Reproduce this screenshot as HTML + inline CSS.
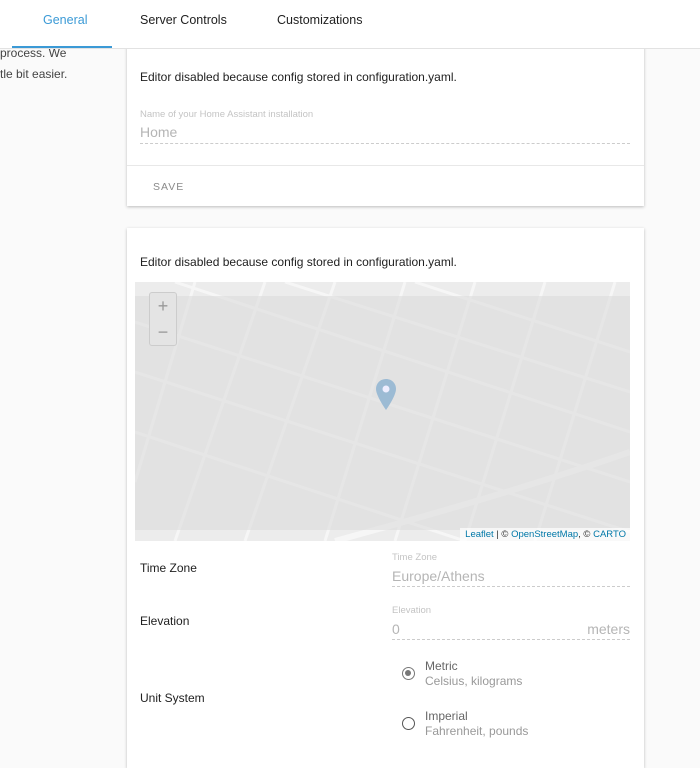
<!DOCTYPE html>
<html><head><style>
*{margin:0;padding:0;box-sizing:border-box}
body{width:700px;height:750px;overflow:hidden;background:#fafafa;font-family:"Liberation Sans",sans-serif;color:#212121;position:relative}
.abs{position:absolute}
.hdr{left:0;top:0;width:700px;height:49px;background:#fff;border-bottom:1px solid #e2e2e2;z-index:5}
.tab{top:13px;font-size:12.5px}
.card{background:#fff;box-shadow:0 1px 3px rgba(0,0,0,.25);left:127px;width:517px}
.t12{font-size:12px}
.dash{border-bottom:1px dashed #ccc}
.lbl{font-size:9.5px;color:#c4c4c4}
.val{font-size:14px;color:#b5b5b5}
</style></head><body>
<div class="abs hdr">
 <div class="abs tab" style="left:43px;color:#3b9ad6">General</div>
 <div class="abs tab" style="left:140px">Server Controls</div>
 <div class="abs tab" style="left:277px">Customizations</div>
 <div class="abs" style="left:12px;top:46px;width:100px;height:2px;background:#3b9ad6"></div>
</div>
<div class="abs t12" style="left:0;top:46px;color:#444">process. We</div>
<div class="abs t12" style="left:0;top:67px;color:#444">tle bit easier.</div>

<div class="abs card" style="top:30px;height:176px">
 <div class="abs t12" style="left:13px;top:40px">Editor disabled because config stored in configuration.yaml.</div>
 <div class="abs lbl" style="left:13px;top:79px">Name of your Home Assistant installation</div>
 <div class="abs val dash" style="left:13px;top:94px;width:490px;height:20px">Home</div>
 <div class="abs" style="left:0;top:135px;width:517px;border-top:1px solid #e8e8e8"></div>
 <div class="abs" style="left:26px;top:151px;font-size:10.5px;letter-spacing:1px;color:#8a8a8a">SAVE</div>
</div>

<div class="abs card" style="top:228px;height:540px">
 <div class="abs t12" style="left:13px;top:27px">Editor disabled because config stored in configuration.yaml.</div>
 <div class="abs" style="left:8px;top:54px;width:495px;height:259px;background:#ececec;overflow:hidden">
  <svg class="abs" style="left:0;top:0" width="495" height="259">
   <g stroke="#f6f6f6" stroke-width="3" fill="none">
    <path d="M0 40 L495 200 M0 90 L495 250 M40 0 L495 150 M150 0 L495 110 M0 150 L330 259 M280 0 L495 70"/>
    <path d="M60 0 L0 200 M130 0 L40 259 M200 0 L110 259 M270 0 L190 259 M340 0 L260 259 M410 0 L330 259 M480 0 L400 259"/>
    <path d="M200 259 Q380 210 495 170" stroke-width="6"/>
   </g>
  </svg>
  <div class="abs" style="left:0;top:14px;width:495px;height:234px;background:rgba(220,220,220,.6)"></div>
  <div class="abs" style="left:14px;top:10px;width:28px;height:54px;border:1px solid #ccc;border-radius:3px;background:#e4e4e4;color:#999;font-size:18px;text-align:center;line-height:26px">+<br>−</div>
  <svg class="abs" style="left:240px;top:96px" width="22" height="34"><path d="M11 1C5 1 1 5.5 1 11c0 7 10 21 10 21s10-14 10-21C21 5.5 17 1 11 1z" fill="#9cbbd4"/><circle cx="11" cy="11" r="3.5" fill="#eef"/></svg>
  <div class="abs" style="right:0;bottom:0;background:rgba(255,255,255,.7);font-size:9.5px;padding:1px 4px 1px 5px;color:#333"><span style="color:#0078a8">Leaflet</span> | © <span style="color:#0078a8">OpenStreetMap</span>, © <span style="color:#0078a8">CARTO</span></div>
 </div>
 <div class="abs t12" style="left:13px;top:333px">Time Zone</div>
 <div class="abs lbl" style="left:265px;top:324px">Time Zone</div>
 <div class="abs val dash" style="left:265px;top:340px;width:238px;height:19px">Europe/Athens</div>
 <div class="abs t12" style="left:13px;top:386px">Elevation</div>
 <div class="abs lbl" style="left:265px;top:377px">Elevation</div>
 <div class="abs val dash" style="left:265px;top:393px;width:238px;height:19px">0<span style="float:right">meters</span></div>
 <div class="abs t12" style="left:13px;top:463px">Unit System</div>
 <div class="abs" style="left:275px;top:439px;width:13px;height:13px;border:1.5px solid #777;border-radius:50%"><div style="margin:2px;width:6px;height:6px;border-radius:50%;background:#777"></div></div>
 <div class="abs t12" style="left:298px;top:431px;color:#666">Metric</div>
 <div class="abs t12" style="left:298px;top:446px;color:#999">Celsius, kilograms</div>
 <div class="abs" style="left:275px;top:489px;width:13px;height:13px;border:1.5px solid #555;border-radius:50%"></div>
 <div class="abs t12" style="left:298px;top:481px;color:#666">Imperial</div>
 <div class="abs t12" style="left:298px;top:496px;color:#999">Fahrenheit, pounds</div>
</div>
</body></html>
